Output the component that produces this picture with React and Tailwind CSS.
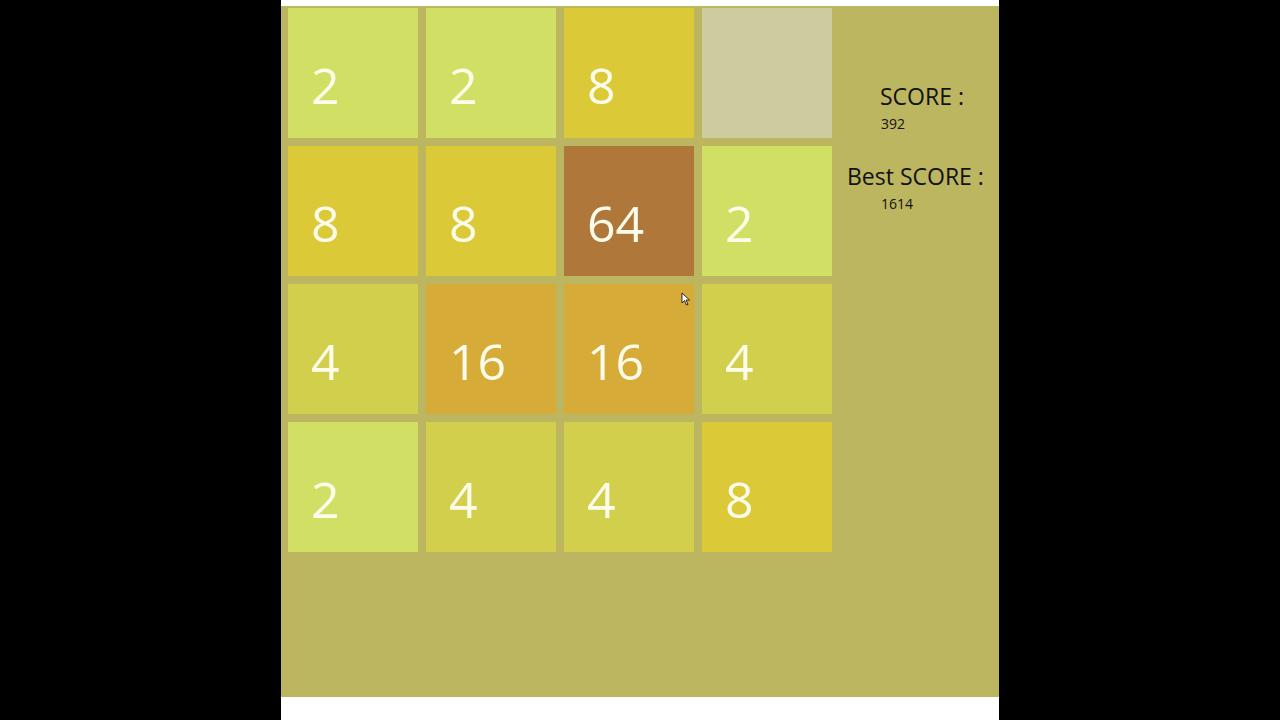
export default function App() {
  const tiles = [
    [2, 2, 8, 0],
    [8, 8, 64, 2],
    [4, 16, 16, 4],
    [2, 4, 4, 8],
  ];
  const bg = {
    0: "bg-[#cecb9f]",
    2: "bg-[#d1e065]",
    4: "bg-[#d2cf4c]",
    8: "bg-[#dbc938]",
    16: "bg-[#d6ab38]",
    64: "bg-[#b0773a]",
  };
  return (
    <div className="w-[1280px] h-[720px] bg-black flex justify-center" style={{ fontFamily: '"Open Sans", "Noto Sans", sans-serif' }}>
      <div className="w-[718px] h-full flex flex-col">
        <div className="h-[6px] bg-white"></div>
        <div className="flex-1 bg-[#bdb661] flex relative">
          <div className="pl-[7px] pt-[2px]">
            <div className="grid grid-cols-[130px_130px_130px_130px] gap-[8px]">
              {tiles.flat().map((v, i) => (
                <div key={i} className={`h-[130px] ${bg[v]} flex items-center pl-[23px] pt-[24px]`}>
                  {v ? (
                    <span className="text-[50px] leading-none text-[#fdfbea]">{v}</span>
                  ) : null}
                </div>
              ))}
            </div>
          </div>
          <div className="flex flex-col pl-[15px] pt-[76px] text-[#111]">
            <div className="pl-[33px] text-[23px] leading-[28px]">SCORE :</div>
            <div className="pl-[34px] text-[14px] leading-[20px] mt-[4px]">392</div>
            <div className="text-[23px] leading-[28px] mt-[28px]">Best SCORE :</div>
            <div className="pl-[34px] text-[14px] leading-[20px] mt-[4px]">1614</div>
          </div>
          <svg className="absolute left-[400px] top-[286px]" width="10" height="14" viewBox="0 0 10 14">
            <path d="M1 1 L1 11 L3.5 8.5 L5.5 13 L7 12.3 L5 8 L8.5 8 Z" fill="#fff" stroke="#000" strokeWidth="0.8" />
          </svg>
        </div>
        <div className="h-[23px] bg-white"></div>
      </div>
    </div>
  );
}
